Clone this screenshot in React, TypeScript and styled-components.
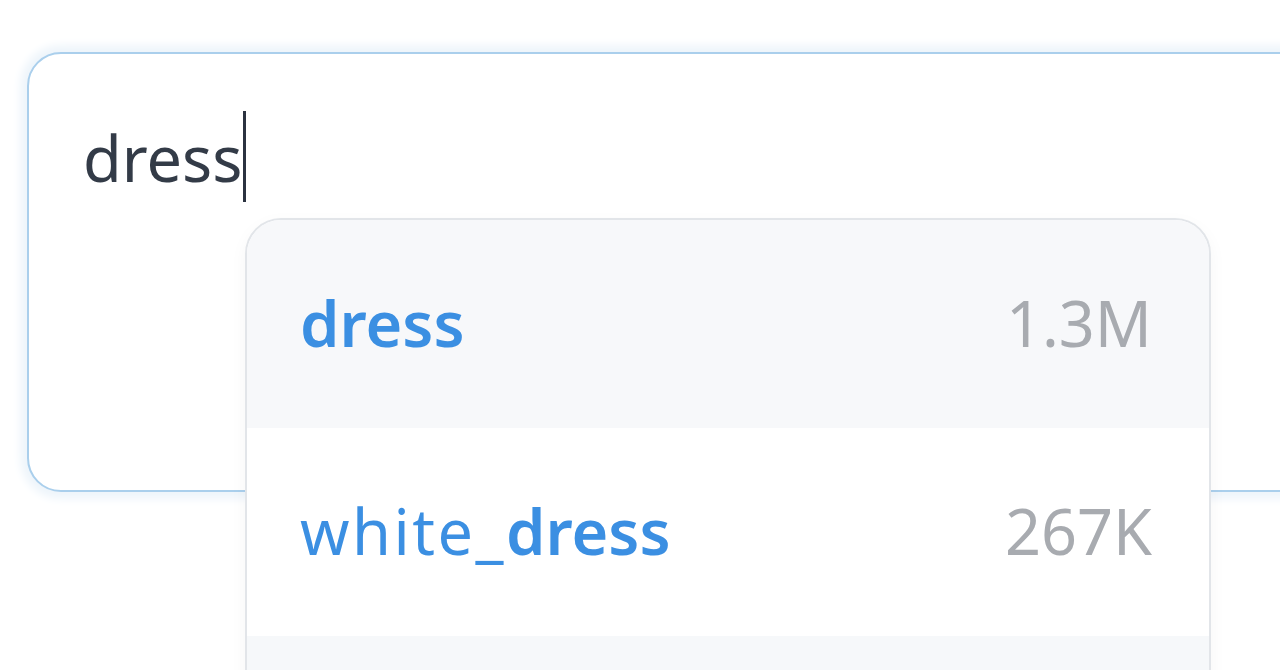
import React from "react";
import styled, { createGlobalStyle } from "styled-components";

const Global = createGlobalStyle`
  html, body { margin: 0; padding: 0; background: #ffffff; overflow: hidden; }
  body { width: 1280px; height: 670px; font-family: "Noto Sans", "Open Sans", sans-serif; }
`;

const Stage = styled.div`
  position: relative;
  width: 1280px;
  height: 670px;
  overflow: hidden;
  box-sizing: border-box;
  padding: 52px 0 0 27px;
  background: #ffffff;
`;

const Field = styled.div`
  width: 1320px;
  height: 440px;
  box-sizing: border-box;
  border: 2px solid #aacfec;
  border-radius: 34px;
  box-shadow: 0 0 8px 7px #eef5fb;
  background: #ffffff;
  padding: 64px 0 0 54px;
`;

const Query = styled.div`
  font-size: 63px;
  line-height: 80px;
  height: 80px;
  color: #333b47;
  white-space: nowrap;
`;

const Caret = styled.span`
  display: inline-block;
  width: 3px;
  height: 91px;
  margin-top: -12px;
  margin-left: 1px;
  vertical-align: -20px;
  background: #2b3240;
`;

const Menu = styled.ul`
  position: absolute;
  left: 245px;
  top: 218px;
  width: 966px;
  margin: 0;
  padding: 0;
  list-style: none;
  box-sizing: border-box;
  border: 2px solid #e2e5e9;
  border-radius: 36px;
  overflow: hidden;
  background: #ffffff;
  box-shadow: 0 6px 18px rgba(30, 40, 60, 0.04);
`;

const Item = styled.li<{ $active?: boolean; $tint?: boolean }>`
  display: flex;
  align-items: center;
  justify-content: space-between;
  height: 208px;
  padding: 0 57px 4px 53px;
  box-sizing: border-box;
  background: ${(p) => (p.$active ? "#f7f8fa" : p.$tint ? "#f6f8fa" : "#ffffff")};
  font-size: 63px;
  line-height: 1;
  white-space: nowrap;
`;

const Term = styled.span`
  color: #3b8fe2;
  font-weight: 400;
`;

const Prefix = styled.span`
  letter-spacing: 2.5px;
`;

const Match = styled.b`
  font-weight: 600;
`;

const Count = styled.span`
  color: #a8abb0;
  font-weight: 400;
`;

const suggestions = [
  { pre: "", match: "dress", count: "1.3M" },
  { pre: "white_", match: "dress", count: "267K" },
  { pre: "", match: "", count: "" },
];

export default function App() {
  return (
    <>
      <Global />
      <Stage>
        <Field>
          <Query>
            dress
            <Caret />
          </Query>
        </Field>
        <Menu>
          {suggestions.map((s, i) => (
            <Item key={i} $active={i === 0} $tint={i === 2}>
              <Term>
                {s.pre && <Prefix>{s.pre}</Prefix>}
                {s.match && <Match>{s.match}</Match>}
              </Term>
              <Count>{s.count}</Count>
            </Item>
          ))}
        </Menu>
      </Stage>
    </>
  );
}
